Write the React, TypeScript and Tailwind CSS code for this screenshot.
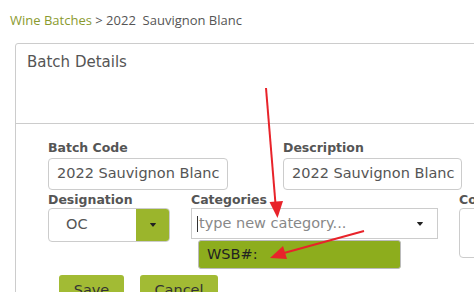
import { BsCaretDownFill } from 'react-icons/bs'

const font = { fontFamily: '"DejaVu Sans", Verdana, sans-serif' }

function Field({ label, value, width }: { label: string; value: string; width: string }) {
  return (
    <div className={`flex flex-col ${width}`}>
      <label className="text-[12.5px] font-bold leading-4 text-[#555] h-[16px]">{label}</label>
      <div className="mt-[2px] h-[32px] rounded-[4px] border border-[#ccc] px-[8px] flex items-center text-[14.5px] text-[#555] whitespace-nowrap overflow-hidden">
        {value}
      </div>
    </div>
  )
}

function Arrows() {
  return (
    <svg className="absolute inset-0 pointer-events-none" width="474" height="292" viewBox="0 0 474 292">
      <line x1="266" y1="88" x2="275.5" y2="204" stroke="#e8232a" strokeWidth="2" />
      <polygon points="269.5,202 283,201 277.5,218" fill="#e8232a" />
      <line x1="364" y1="231" x2="284" y2="253" stroke="#e8232a" strokeWidth="2" />
      <polygon points="270,258 283,246 287,259" fill="#e8232a" />
    </svg>
  )
}

export default function App() {
  return (
    <div className="relative w-[474px] h-[292px] overflow-hidden bg-white" style={font}>
      <div
        className="pl-[10px] pt-[12px] h-[43px] text-[13px] leading-4 whitespace-nowrap"
        style={{ fontFamily: '"Open Sans", sans-serif' }}
      >
        <span className="text-[#8a9a2e]">Wine Batches</span>
        <span className="text-[#555]"> &gt; 2022 &nbsp;Sauvignon Blanc</span>
      </div>

      <div className="ml-[15px] w-[520px] h-[260px] border border-[#ccc] rounded-[3px]">
        <div className="h-[80px] border-b border-[#ccc] pl-[11px] pt-[8px] text-[15px] leading-5 text-[#555]">
          Batch Details
        </div>

        <div className="pl-[32px] pt-[16px]">
          <div className="flex gap-[55px]">
            <Field label="Batch Code" value="2022 Sauvignon Blanc" width="w-[180px]" />
            <Field label="Description" value="2022 Sauvignon Blanc" width="w-[179px]" />
          </div>

          <div className="flex gap-[21px] mt-[2px]">
            <div className="flex flex-col w-[122px]">
              <label className="text-[12.5px] font-bold leading-4 text-[#555] h-[16px]">Designation</label>
              <div className="flex h-[34px] rounded-[4px] border border-[#ccc] overflow-hidden">
                <div className="flex-1 flex items-center pl-[17px] text-[14.5px] text-[#555]">OC</div>
                <div className="w-[33px] bg-[#9bb52c] flex items-center justify-center">
                  <BsCaretDownFill className="text-[#222] w-[8px] h-[8px]" />
                </div>
              </div>
            </div>

            <div className="relative flex flex-col w-[247px]">
              <label className="text-[12.5px] font-bold leading-4 text-[#555] h-[16px]">Categories</label>
              <div className="flex items-center h-[31px] border border-[#ccc] pl-[5px] pr-[13px] text-[14.5px]">
                <span className="w-px h-[16px] bg-[#333] mr-[1px]" />
                <span className="flex-1 text-[#888] whitespace-nowrap">type new category...</span>
                <BsCaretDownFill className="text-[#222] w-[8px] h-[8px]" />
              </div>
              <div className="absolute left-[7px] top-[48px] w-[203px] h-[29px] rounded-[3px] border border-[#bbb] bg-[#8dad1d] flex items-center pl-[8px] text-[14.5px] text-[#222]">
                WSB#:
              </div>
            </div>

            <div className="flex flex-col w-[60px]">
              <label className="text-[12.5px] font-bold leading-4 text-[#555] h-[16px] whitespace-nowrap">Co</label>
              <div className="h-[50px] rounded-[4px] border border-[#ccc]" />
            </div>
          </div>

          <div className="flex gap-[16px] pl-[11px] mt-[17px]">
            <button className="w-[65px] h-[30px] rounded-[3px] bg-[#a2bb34] text-[14.5px] text-[#333] pt-[2px]">Save</button>
            <button className="w-[78px] h-[30px] rounded-[3px] bg-[#a2bb34] text-[14.5px] text-[#333] pt-[2px]">Cancel</button>
          </div>
        </div>
      </div>

      <Arrows />
    </div>
  )
}
